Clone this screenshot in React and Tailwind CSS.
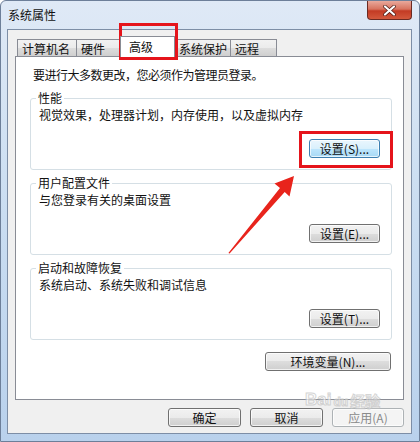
import React from 'react';

const cjk = "font-['Noto_Sans_CJK_SC','Noto_Sans',sans-serif]";

function WinButton({ children, focused, disabled, className = '' }) {
  const skin = disabled
    ? 'border-[#adb2b5] bg-[#f4f4f4] text-[#8a8a8a]'
    : focused
    ? 'border-[#3c7fb1] bg-[linear-gradient(#eaf6fd_0%,#d9f0fc_50%,#bee6fd_50%,#a7d9f5_100%)] text-[#111]'
    : 'border-[#707070] bg-[linear-gradient(#f2f2f2_0%,#ebebeb_50%,#dddddd_50%,#cfcfcf_100%)] text-[#111]';
  return (
    <div
      className={`flex h-[19px] items-center justify-center rounded-[3px] border text-[12px] leading-none shadow-[inset_0_0_0_1px_rgba(255,255,255,0.7)] ${skin} ${className}`}
    >
      {children}
    </div>
  );
}

function Group({ title, desc, btn, focused }) {
  return (
    <div className="relative ml-[14px] mr-[11px] flex h-[72px] flex-col rounded-[3px] border border-[#d5dfe5]">
      <span className="absolute -top-[8px] left-[5px] bg-white px-[2px] text-[12px] leading-[14px] text-[#111]">
        {title}
      </span>
      <p className="pl-[8px] pt-[9px] text-[12px] leading-[14px] text-[#111]">{desc}</p>
      <div className="mt-[17px] flex justify-end pr-[11px]">
        <WinButton focused={focused} className="w-[71px]">
          {btn}
        </WinButton>
      </div>
    </div>
  );
}

function Tab({ label, active, className = '' }) {
  if (active) {
    return (
      <div
        className={`relative z-10 -mb-px flex h-[21px] items-start border border-b-0 border-[#898c95] bg-white pl-[8px] pt-[3px] text-[12px] leading-[14px] text-[#111] ${className}`}
      >
        {label}
      </div>
    );
  }
  return (
    <div
      className={`flex h-[17px] items-start border border-b-0 border-[#898c95] bg-[linear-gradient(#f2f2f2_0%,#ebebeb_50%,#dddddd_50%,#cfcfcf_100%)] pl-[4px] pt-[2px] text-[12px] leading-[14px] text-[#111] ${className}`}
    >
      {label}
    </div>
  );
}

export default function App() {
  return (
    <div
      className={`relative h-[442px] w-[420px] overflow-hidden rounded-t-[6px] border border-[#6d7f99] bg-[linear-gradient(#dfe9f6_0%,#cddff2_40%,#b9d1ec_100%)] ${cjk}`}
    >
      {/* title bar */}
      <div className="flex h-[28px] items-start">
        <span className="pl-[7px] pt-[7px] text-[12px] leading-[14px] text-[#111]">系统属性</span>
        <div className="ml-auto mr-[7px] flex h-[19px] w-[45px] items-center justify-center rounded-b-[4px] border border-t-0 border-[#6b2a22] bg-[linear-gradient(#e9a99c_0%,#d7735f_45%,#c33b24_55%,#d3583c_100%)]">
          <svg width="13" height="11" viewBox="0 0 13 11">
            <path
              d="M2 1.5 L11 9.5 M11 1.5 L2 9.5"
              stroke="#4a1a14"
              strokeWidth="3.6"
              strokeLinecap="round"
            />
            <path
              d="M2 1.5 L11 9.5 M11 1.5 L2 9.5"
              stroke="#ffffff"
              strokeWidth="2.2"
              strokeLinecap="round"
            />
          </svg>
        </div>
      </div>

      {/* client area */}
      <div className="ml-[6px] mr-[7px] flex h-[405px] flex-col border border-[#7d8ea6] bg-[#f0f0f0] px-[7px]">
        <div className="mt-[6px] flex h-[20px] items-end pl-[2px]">
          <Tab label="计算机名" className="w-[60px]" />
          <Tab label="硬件" className="-ml-px w-[45px]" />
          <Tab label="高级" active className="-ml-px w-[55px]" />
          <Tab label="系统保护" className="-ml-px w-[57px]" />
          <Tab label="远程" className="-ml-px w-[47px]" />
        </div>

        <div className="flex h-[344px] flex-col border border-[#898c95] bg-white">
          <p className="pl-[17px] pt-[11px] text-[12px] leading-[14px] tracking-[-0.5px] text-[#111]">
            要进行大多数更改，您必须作为管理员登录。
          </p>
          <div className="mt-[16px] flex flex-col gap-[13px]">
            <Group title="性能" desc="视觉效果，处理器计划，内存使用，以及虚拟内存" btn="设置(S)..." focused />
            <Group title="用户配置文件" desc="与您登录有关的桌面设置" btn="设置(E)..." />
            <Group title="启动和故障恢复" desc="系统启动、系统失败和调试信息" btn="设置(T)..." />
          </div>
          <div className="mt-[12px] flex justify-end pr-[12px]">
            <WinButton className="w-[126px]">环境变量(N)...</WinButton>
          </div>
        </div>

        <div className="mt-[8px] flex justify-end gap-[9px]">
          <WinButton className="w-[73px]">确定</WinButton>
          <WinButton className="w-[73px]">取消</WinButton>
          <WinButton disabled className="w-[72px]">应用(A)</WinButton>
        </div>
      </div>

      {/* annotation: red boxes and arrow */}
      <div className="pointer-events-none absolute left-[118px] top-[22px] h-[37px] w-[59px] border-[3px] border-[#e5141b]" />
      <div className="pointer-events-none absolute left-[298px] top-[130px] h-[37px] w-[94px] border-[3px] border-[#e5141b]" />
      <svg className="pointer-events-none absolute left-0 top-0" width="420" height="442">
        <polygon
          points="227.4,252 279,187 273.5,182.5 293,175 288.5,195.5 283.7,191 228.6,252.6"
          fill="#e8241c"
        />
      </svg>

      {/* watermark */}
      <div className="pointer-events-none absolute left-[304px] top-[390px] flex items-end gap-[2px] text-[17px] font-bold leading-none text-white opacity-70 [-webkit-text-stroke:1px_#c4c4c4] font-['Liberation_Sans',sans-serif]">
        <span>Bai</span>
        <span className="text-[12px]">du</span>
        <span className={`text-[15px] ${cjk}`}>经验</span>
      </div>
    </div>
  );
}
